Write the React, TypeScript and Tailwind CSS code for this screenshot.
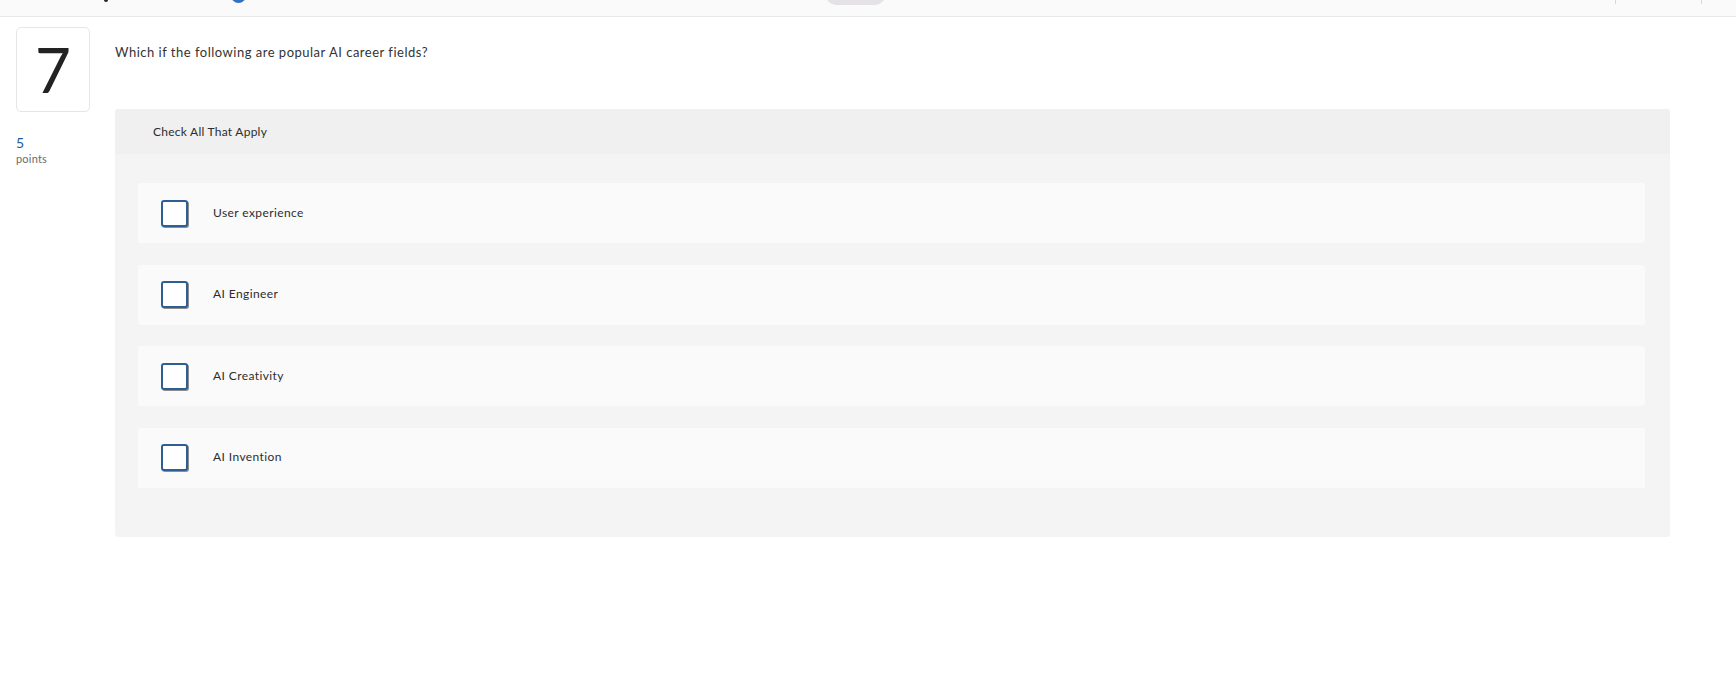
const options = ["User experience", "AI Engineer", "AI Creativity", "AI Invention"];

const font = { fontFamily: "Lato, 'Open Sans', sans-serif" };

const TopBar = () => (
  <div className="h-[17px] bg-[#fafafa] border-b border-[#e8e8e8] overflow-hidden flex items-start">
    {/* cut-off header content */}
    <div className="ml-[104px] -mt-[10px] w-[4px] h-[12px] bg-[#222] rounded-sm" />
    <div className="ml-[123px] -mt-[12px] w-[15px] h-[15px] rounded-full bg-[#2f6fc4]" />
    <div className="ml-[580px] -mt-[15px] w-[59px] h-[20px] rounded-full bg-[#e4e2e6]" />
    <div className="ml-[730px] w-px h-[4px] bg-[#d8d8d8]" />
    <div className="ml-[85px] w-px h-[4px] bg-[#d8d8d8]" />
  </div>
);

const Checkbox = () => (
  <div className="w-[27px] h-[27px] rounded-[3px] border-2 border-[#2d5f96] bg-white shadow-[1px_1px_0_#8d8d8d] shrink-0" />
);

export default function App() {
  return (
    <div className="w-[1736px] h-[695px] bg-white text-[#2d2d2d]" style={font}>
      <TopBar />
      <div className="flex pl-[16px] pt-[10px]">
        {/* left column */}
        <div className="w-[74px] shrink-0">
          <div className="h-[85px] border border-[#e6e6e6] rounded-[5px] flex items-center justify-center">
            <span className="text-[62px] leading-none text-[#222] font-normal -mt-[2px]">7</span>
          </div>
          <div className="mt-[23px] text-[14px] leading-[16px] text-[#1d5b9a]">5</div>
          <div className="text-[11px] leading-[15px] text-[#6b6b6b] tracking-[0.2px]">points</div>
        </div>

        {/* question */}
        <div className="ml-[25px] w-[1555px]">
          <div className="mt-[15px] h-[67px] text-[13px] leading-[20px] text-[#333] tracking-[0.5px]">
            Which if the following are popular AI career fields?
          </div>
          <div className="rounded-[3px] overflow-hidden bg-[#f4f4f4]">
            <div className="h-[45px] bg-[#f0f0f0] pl-[38px] flex items-center text-[12px] text-[#2d2d2d] tracking-[0.25px]">
              Check All That Apply
            </div>
            <div className="pt-[29px] pl-[23px] pr-[25px] pb-[49px] flex flex-col gap-[21.67px]">
              {options.map((o) => (
                <div key={o} className="h-[60px] bg-[#fafafa] rounded-[3px] flex items-center pl-[23px]">
                  <Checkbox />
                  <span className="ml-[25px] text-[12px] text-[#2d2d2d] tracking-[0.4px] -mt-[1px]">{o}</span>
                </div>
              ))}
            </div>
          </div>
        </div>
      </div>
    </div>
  );
}
